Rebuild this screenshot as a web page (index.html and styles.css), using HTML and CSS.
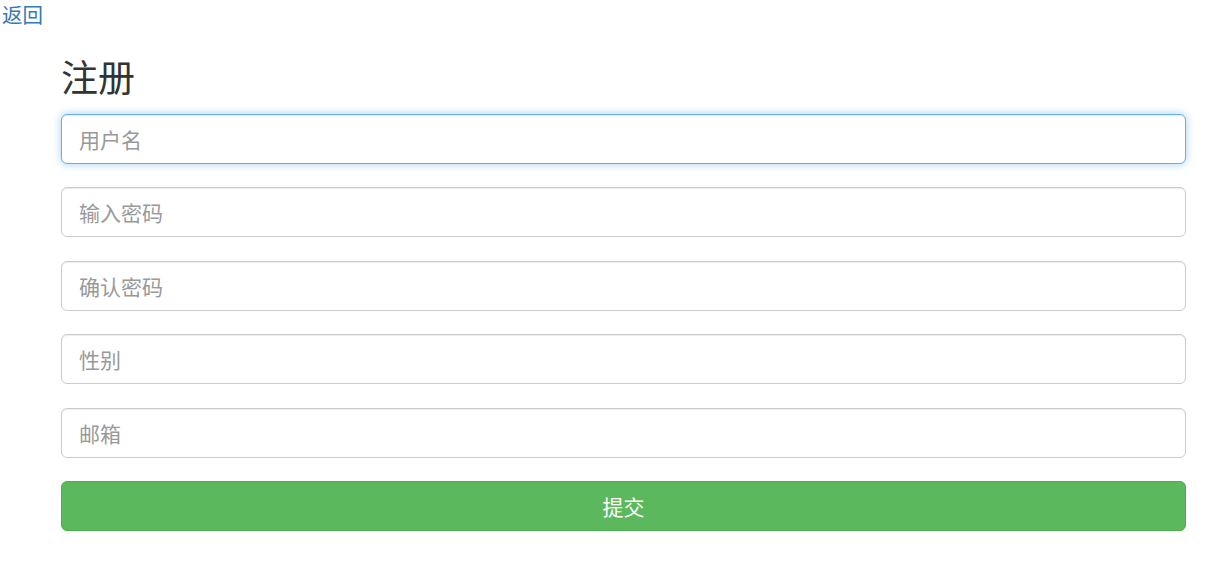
FILE: index.html
```html
<!DOCTYPE html>
<html lang="zh-CN">
<head>
<meta charset="utf-8">
<title>注册</title>
<link rel="stylesheet" href="styles.css">
</head>
<body>
<a class="back" href="#">返回</a>
<div class="wrap">
  <h1 class="title">注册</h1>
  <form class="form">
    <input class="field is-focus" type="text" placeholder="用户名">
    <input class="field" type="password" placeholder="输入密码">
    <input class="field" type="password" placeholder="确认密码">
    <input class="field" type="text" placeholder="性别">
    <input class="field" type="email" placeholder="邮箱">
    <button class="submit" type="button">提交</button>
  </form>
</div>
</body>
</html>
```
FILE: styles.css
```css
* { box-sizing: border-box; }
html, body { margin: 0; padding: 0; background: #fff; }
body {
  font-family: "Noto Sans CJK SC", "Liberation Sans", sans-serif;
  color: #333;
  font-size: 14px;
}
.back {
  display: block;
  width: max-content;
  padding-left: 2px;
  font-size: 20.5px;
  line-height: 28px;
  color: #337ab7;
  text-decoration: none;
}
.wrap {
  margin: 0 43px 0 61px;
}
.title {
  margin: 28px 0 18px 0;
  font-size: 37px;
  font-weight: 400;
  line-height: 40px;
  color: #333;
}
.form {
  display: flex;
  flex-direction: column;
  gap: 23.4px;
}
.field {
  display: block;
  width: 100%;
  height: 50px;
  padding: 0 17px;
  font-family: inherit;
  font-size: 21px;
  color: #555;
  background: #fff;
  border: 1px solid #ccc;
  border-radius: 6px;
  box-shadow: inset 0 1px 1px rgba(0,0,0,.075);
  outline: none;
}
.field::placeholder { color: #999; }
.field.is-focus {
  border-color: #66afe9;
  box-shadow: inset 0 1px 1px rgba(0,0,0,.075), 0 0 8px rgba(102,175,233,.6);
}
.submit {
  display: block;
  width: 100%;
  height: 50px;
  font-family: inherit;
  font-size: 21px;
  color: #fff;
  background: #5cb85c;
  border: 1px solid #4cae4c;
  border-radius: 6px;
  cursor: pointer;
}
```
